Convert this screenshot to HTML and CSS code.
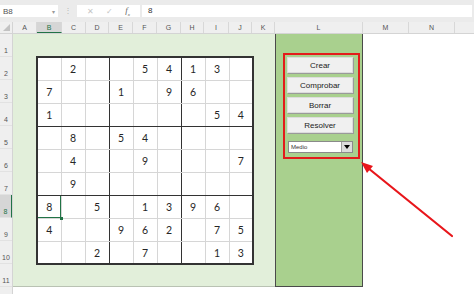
FILE: index.html
```html
<!DOCTYPE html>
<html lang="es">
<head>
    <meta charset="UTF-8">
    <meta name="viewport" content="width=device-width, initial-scale=1.0">
    <title>Sudoku</title>
    <link rel="stylesheet" href="styles.css">
</head>
<body>
    <div class="app">
        <!-- Formula bar -->
        <div class="formula-bar">
            <div class="name-box"><span>B8</span><span class="caret">▾</span></div>
            <div class="grip">⋮</div>
            <div class="fx-tools">
                <span class="tool">✕</span>
                <span class="tool">✓</span>
                <span class="fx">f<sub>x</sub></span>
            </div>
            <div class="formula-input">8</div>
        </div>

        <!-- Column headers -->
        <div class="col-heads">
            <div class="corner"></div>
            <div class="ch w24">A</div>
            <div class="ch w25 active">B</div>
            <div class="ch w24">C</div>
            <div class="ch w23">D</div>
            <div class="ch w24">E</div>
            <div class="ch w24">F</div>
            <div class="ch w24">G</div>
            <div class="ch w23">H</div>
            <div class="ch w25">I</div>
            <div class="ch w23">J</div>
            <div class="ch w23">K</div>
            <div class="ch w88">L</div>
            <div class="ch w46">M</div>
            <div class="ch w46">N</div>
            <div class="ch rest"></div>
        </div>

        <div class="sheet">
            <div class="row-heads">
                <div class="rh">1</div>
                <div class="rh">2</div>
                <div class="rh">3</div>
                <div class="rh">4</div>
                <div class="rh">5</div>
                <div class="rh">6</div>
                <div class="rh">7</div>
                <div class="rh active">8</div>
                <div class="rh">9</div>
                <div class="rh">10</div>
                <div class="rh">11</div>
                <div class="rh">12</div>
            </div>

            <div class="board">
                <table class="sudoku">
                    <tr><td></td><td>2</td><td></td><td></td><td>5</td><td>4</td><td>1</td><td>3</td><td></td></tr>
                    <tr><td>7</td><td></td><td></td><td>1</td><td></td><td>9</td><td>6</td><td></td><td></td></tr>
                    <tr><td>1</td><td></td><td></td><td></td><td></td><td></td><td></td><td>5</td><td>4</td></tr>
                    <tr><td></td><td>8</td><td></td><td>5</td><td>4</td><td></td><td></td><td></td><td></td></tr>
                    <tr><td></td><td>4</td><td></td><td></td><td>9</td><td></td><td></td><td></td><td>7</td></tr>
                    <tr><td></td><td>9</td><td></td><td></td><td></td><td></td><td></td><td></td><td></td></tr>
                    <tr><td class="sel">8</td><td></td><td>5</td><td></td><td>1</td><td>3</td><td>9</td><td>6</td><td></td></tr>
                    <tr><td>4</td><td></td><td></td><td>9</td><td>6</td><td>2</td><td></td><td>7</td><td>5</td></tr>
                    <tr><td></td><td></td><td>2</td><td></td><td>7</td><td></td><td></td><td>1</td><td>3</td></tr>
                </table>
            </div>

            <div class="panel">
                <div class="controls">
                    <button class="btn">Crear</button>
                    <button class="btn">Comprobar</button>
                    <button class="btn">Borrar</button>
                    <button class="btn">Resolver</button>
                    <div class="select">
                        <span class="select-text">Medio</span>
                        <span class="select-arrow"></span>
                    </div>
                </div>
            </div>

            <div class="blank"></div>
        </div>

        <!-- Annotation arrow -->
        <svg class="arrow" width="474" height="294" viewBox="0 0 474 294">
            <line x1="452" y1="236" x2="368" y2="168" stroke="#e8161b" stroke-width="2.2" stroke-linecap="round"/>
            <polygon points="361,162 373,166 367,173" fill="#e8161b"/>
        </svg>
    </div>
</body>
</html>
```

FILE: styles.css
```css
* {
    margin: 0;
    padding: 0;
    box-sizing: border-box;
}

body {
    width: 474px;
    height: 294px;
    overflow: hidden;
    background: #fff;
    font-family: 'Liberation Sans', Arial, sans-serif;
}

.app {
    position: relative;
    width: 474px;
    height: 294px;
    overflow: hidden;
}

/* Formula bar */
.formula-bar {
    height: 22px;
    background: #ebebeb;
    display: flex;
    align-items: flex-start;
    padding-top: 5px;
}

.name-box {
    width: 58px;
    height: 12px;
    background: #fff;
    display: flex;
    align-items: center;
    justify-content: space-between;
    padding: 0 3px 0 3px;
    font-size: 8px;
    color: #555;
}

.name-box .caret {
    font-size: 6px;
    color: #999;
}

.grip {
    width: 19px;
    height: 12px;
    text-align: center;
    font-size: 8px;
    line-height: 12px;
    color: #b8b8b8;
}

.fx-tools {
    width: 63px;
    height: 12px;
    background: #fff;
    display: flex;
    align-items: center;
    justify-content: space-around;
    padding: 0 4px;
    font-size: 8px;
    color: #c4c4c4;
}

.fx-tools .fx {
    font-family: 'Liberation Serif', serif;
    font-style: italic;
    color: #666;
    font-size: 9px;
}

.fx-tools .fx sub {
    font-size: 5px;
}

.formula-input {
    flex: 1;
    height: 12px;
    margin-left: 2px;
    margin-right: 2px;
    background: #fff;
    font-size: 8px;
    line-height: 12px;
    padding-left: 6px;
    color: #333;
}

/* Column headers */
.col-heads {
    height: 12px;
    display: flex;
    background: #efefef;
    border-bottom: 1px solid #d4d4d4;
}

.corner {
    width: 13px;
    position: relative;
    border-right: 1px solid #d4d4d4;
}

.corner::after {
    content: "";
    position: absolute;
    right: 2px;
    bottom: 2px;
    border-left: 7px solid transparent;
    border-bottom: 7px solid #c2c2c2;
}

.ch {
    font-size: 7px;
    color: #555;
    text-align: center;
    line-height: 11px;
    border-right: 1px solid #d8d8d8;
}

.ch.active {
    background: #d6d6d6;
    color: #217346;
    border-bottom: 1px solid #217346;
}

.w23 { width: 23px; }
.w24 { width: 24px; }
.w25 { width: 25px; }
.w46 { width: 46px; }
.w88 { width: 88px; }
.rest { flex: 1; border-right: none; }

/* Sheet */
.sheet {
    display: flex;
    height: 260px;
}

.row-heads {
    width: 13px;
    background: #efefef;
    border-right: 1px solid #d4d4d4;
}

.rh {
    height: 23px;
    font-size: 7px;
    color: #555;
    text-align: center;
    display: flex;
    align-items: flex-end;
    justify-content: center;
    padding-bottom: 2px;
    border-bottom: 1px solid #e2e2e2;
}

.rh.active {
    background: #d6d6d6;
    color: #217346;
    border-right: 1px solid #217346;
}

.board {
    width: 262px;
    height: 253px;
    background: #e2efda;
    border-bottom: 1px solid #b9c2b3;
    padding: 22px 0 0 23px;
}

.sudoku {
    border-collapse: collapse;
    table-layout: fixed;
    width: 216px;
    background: #fff;
    border: 2px solid #333;
    font-family: Lato, 'Liberation Sans', sans-serif;
    font-size: 10.5px;
    color: #262626;
}

.sudoku td {
    width: 24px;
    height: 23px;
    border: 1px solid #d6d6d6;
    text-align: center;
    vertical-align: middle;
    padding-top: 1px;
}

.sudoku td:nth-child(3),
.sudoku td:nth-child(6) {
    border-right: 1px solid #333;
}

.sudoku tr:nth-child(3) td,
.sudoku tr:nth-child(6) td {
    border-bottom: 1px solid #333;
}

.sudoku td.sel {
    position: relative;
    box-shadow: inset -1px -1px 0 #217346;
}

.sudoku td.sel::after {
    content: "";
    position: absolute;
    right: -2px;
    bottom: -2px;
    width: 3px;
    height: 3px;
    background: #217346;
}

/* Control panel column */
.panel {
    width: 88px;
    height: 253px;
    background: #a9d08e;
    border-left: 1px solid #4a4a4a;
    border-right: 1px solid #4a4a4a;
    border-bottom: 1px solid #4a4a4a;
    padding: 19px 0 0 7px;
}

.controls {
    width: 77px;
    border: 2px solid #e31b1b;
    padding: 2px 0 4px 2px;
    display: flex;
    flex-direction: column;
    gap: 4px;
}

.btn {
    width: 66px;
    height: 16px;
    background: #f0f0f0;
    border: 1px solid #dcdcdc;
    box-shadow: 1px 1px 0 #9a9a9a;
    font-family: 'Liberation Sans', Arial, sans-serif;
    font-size: 8px;
    color: #222;
    cursor: pointer;
}

.select {
    width: 65px;
    height: 12px;
    margin: 4px 0 0 1px;
    background: #fff;
    border: 1px solid #8a8a8a;
    display: flex;
    align-items: center;
    justify-content: space-between;
}

.select-text {
    font-size: 6px;
    color: #333;
    padding-left: 2px;
}

.select-arrow {
    width: 11px;
    height: 10px;
    background: #dcdcdc;
    border-left: 1px solid #a0a0a0;
    position: relative;
}

.select-arrow::after {
    content: "";
    position: absolute;
    left: 2px;
    top: 3px;
    border-left: 3.5px solid transparent;
    border-right: 3.5px solid transparent;
    border-top: 4px solid #000;
}

.blank {
    flex: 1;
    background: #fff;
}

/* Annotation */
.arrow {
    position: absolute;
    left: 0;
    top: 0;
    pointer-events: none;
}
```
